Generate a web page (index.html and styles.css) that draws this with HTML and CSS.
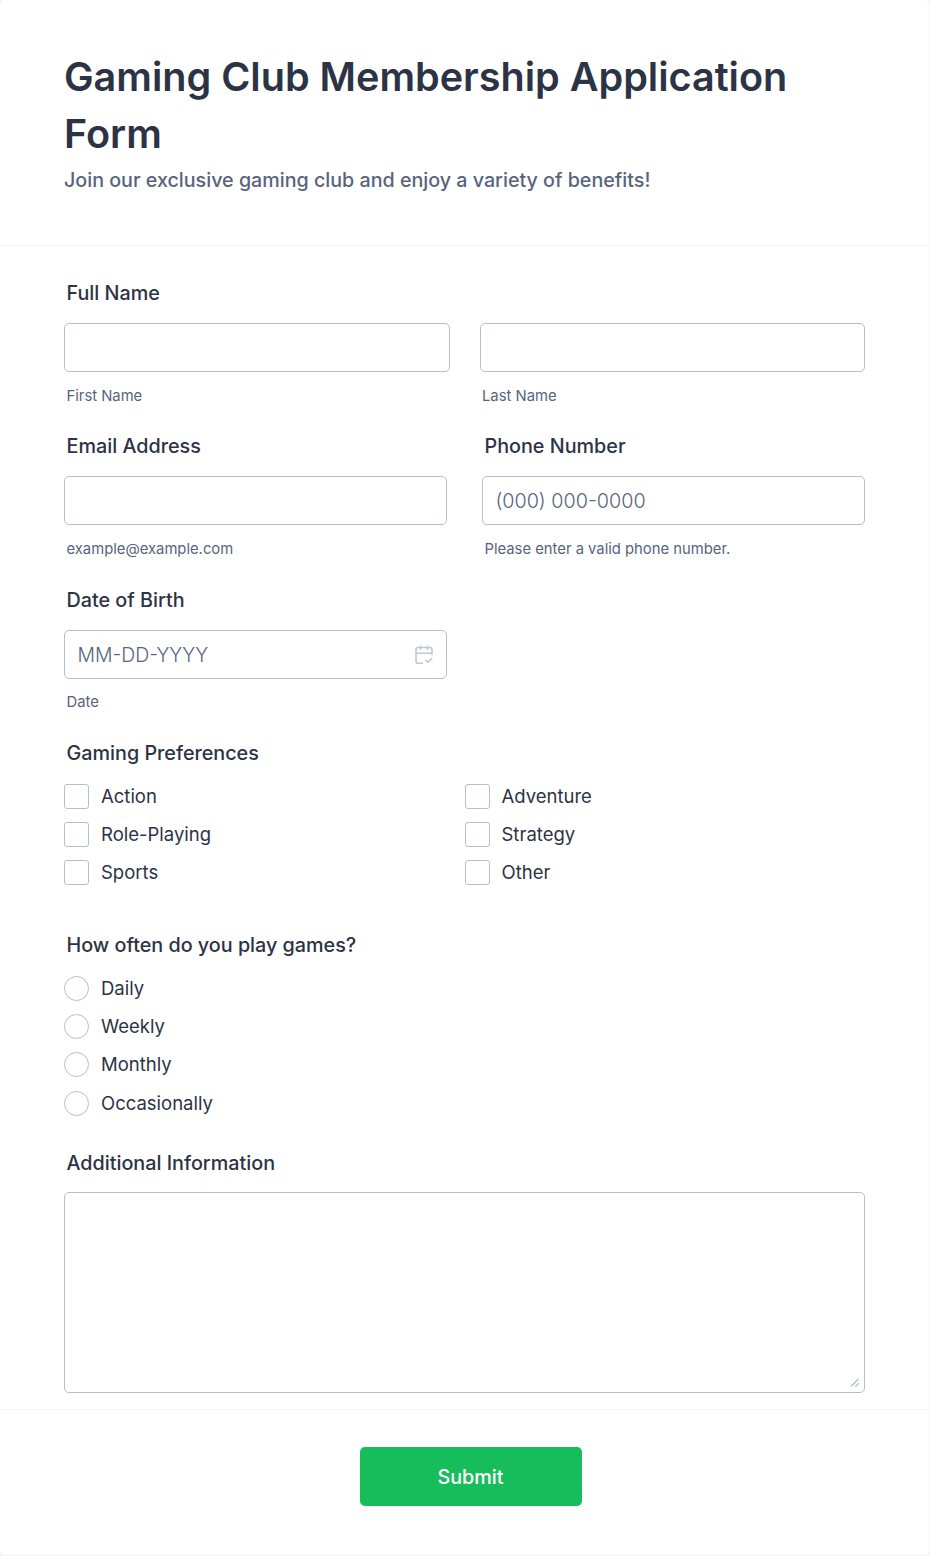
FILE: index.html
```html
<!DOCTYPE html>
<html lang="en">

<head>
    <meta charset="UTF-8" />
    <meta name="viewport" content="width=device-width, initial-scale=1.0" />
    <title>Gaming Club Membership Application Form</title>
    <link rel="stylesheet" href="styles.css">
</head>

<body>
    <form class="form">
        <div class="form-header">
            <h1>Gaming Club Membership Application Form</h1>
            <p>Join our exclusive gaming club and enjoy a variety of benefits!</p>
        </div>

        <div class="form-body">
            <!-- Full name -->
            <div class="field">
                <label class="label" for="first">Full Name</label>
                <div class="names">
                    <div>
                        <input class="text-input" type="text" id="first">
                        <span class="sub-label">First Name</span>
                    </div>
                    <div>
                        <input class="text-input" type="text" id="last">
                        <span class="sub-label">Last Name</span>
                    </div>
                </div>
            </div>

            <!-- Email and phone -->
            <div class="columns">
                <div class="field">
                    <label class="label" for="email">Email Address</label>
                    <input class="text-input" type="email" id="email">
                    <span class="sub-label">example@example.com</span>
                </div>
                <div class="field">
                    <label class="label" for="phone">Phone Number</label>
                    <input class="text-input" type="tel" id="phone" placeholder="(000) 000-0000">
                    <span class="sub-label">Please enter a valid phone number.</span>
                </div>
            </div>

            <!-- Date of birth -->
            <div class="columns">
                <div class="field">
                    <label class="label" for="birth">Date of Birth</label>
                    <div class="date-box">
                        <input class="text-input" type="text" id="birth" placeholder="MM-DD-YYYY">
                        <svg class="calendar" width="18" height="20" viewBox="0 0 18 20">
                            <path d="M8 18.2H3A2 2 0 0 1 1 16.2V4.5A2 2 0 0 1 3 2.5H15A2 2 0 0 1 17 4.5V10M1 8.2H17M5.5 0.5V5M12.5 0.5V5M10.5 14.8L13 17.2L17.2 13" />
                        </svg>
                    </div>
                    <span class="sub-label">Date</span>
                </div>
            </div>

            <div class="field-options">
                <span class="label">Gaming Preferences</span>
                <div class="options two-cols">
                    <label class="option"><input type="checkbox">Action</label>
                    <label class="option"><input type="checkbox">Adventure</label>
                    <label class="option"><input type="checkbox">Role-Playing</label>
                    <label class="option"><input type="checkbox">Strategy</label>
                    <label class="option"><input type="checkbox">Sports</label>
                    <label class="option"><input type="checkbox">Other</label>
                </div>
            </div>

            <div class="field-options often">
                <span class="label">How often do you play games?</span>
                <div class="options">
                    <label class="option"><input type="radio" name="often">Daily</label>
                    <label class="option"><input type="radio" name="often">Weekly</label>
                    <label class="option"><input type="radio" name="often">Monthly</label>
                    <label class="option"><input type="radio" name="often">Occasionally</label>
                </div>
            </div>

            <div class="field-info">
                <label class="label" for="info">Additional Information</label>
                <div class="area-box">
                    <textarea id="info"></textarea>
                    <svg class="grip" width="10" height="10" viewBox="0 0 10 10">
                        <path d="M1 8.5L8.5 1M5.2 8.7L8.8 5.2" />
                    </svg>
                </div>
            </div>
        </div>

        <div class="form-footer">
            <button class="submit" type="button">Submit</button>
        </div>
    </form>
</body>

</html>
```

FILE: styles.css
```css
* {
    box-sizing: border-box;
}

body {
    margin: 0;
    padding: 0 1px 1px 0;
    background-color: #f3f3fe;
    font-family: Inter, sans-serif;
    color: #2c3345;
}

.form {
    height: 1555px;
    background-color: #fff;
    border-radius: 5px;
}

.form-header {
    height: 246px;
    padding: 49px 64px 0;
    border-bottom: 1px solid #f3f3fe;
}

h1 {
    margin: 0;
    font-size: 39.55px;
    font-weight: 600;
    line-height: 57px;
}

.form-header p {
    margin: 5px 0 0;
    font-size: 19.68px;
    font-weight: 500;
    line-height: 24px;
    color: #57647e;
}

.form-body {
    height: 1164px;
    padding: 35px 64px 0;
    border-bottom: 1px solid #f3f3fe;
}

.field {
    height: 153.3px;
}

.label {
    display: block;
    height: 24px;
    padding-left: 2.5px;
    font-size: 19.75px;
    font-weight: 500;
    line-height: 25px;
}

.text-input {
    display: block;
    width: 100%;
    height: 49px;
    margin-top: 18px;
    padding: 0 12.4px;
    border: 1px solid #b8bdcd;
    border-radius: 5px;
    outline: none;
    font-family: inherit;
    font-size: 19.75px;
    background-color: #fff;
}

.text-input::placeholder {
    color: #57647e;
    font-weight: 300;
}

#birth {
    padding-top: 1px;
}

#birth::placeholder {
    font-size: 19.45px;
}

.sub-label {
    display: block;
    margin-top: 14.7px;
    padding-left: 2.5px;
    font-size: 14.8px;
    line-height: 18px;
    color: #57647e;
}

.names {
    display: grid;
    grid-template-columns: 1fr 1fr;
    gap: 30px;
}

.columns {
    display: grid;
    grid-template-columns: 1fr 1fr;
    gap: 35px;
}

.date-box,
.area-box {
    position: relative;
}

.calendar {
    position: absolute;
    top: 15px;
    right: 14px;
}

.calendar path {
    fill: none;
    stroke: #c3c7d4;
    stroke-width: 1.6;
}

.options {
    display: grid;
    row-gap: 13.3px;
    margin-top: 19px;
}

.two-cols {
    grid-template-columns: 1fr 1fr;
}

.option {
    display: flex;
    align-items: flex-start;
    gap: 12px;
    height: 25px;
    font-size: 18.5px;
    line-height: 24px;
}

.option input {
    appearance: none;
    width: 25px;
    height: 25px;
    margin: 0;
    border: 1px solid #b8bdcd;
    border-radius: 3px;
    background-color: #fff;
}

.option input[type="radio"] {
    border-radius: 50%;
}

.often {
    margin-top: 47.2px;
}

.field-info {
    margin-top: 35.4px;
}

.area-box {
    margin-top: 17px;
}

textarea {
    display: block;
    width: 100%;
    height: 201.5px;
    border: 1px solid #b8bdcd;
    border-radius: 5px;
    outline: none;
    resize: none;
}

.grip {
    position: absolute;
    right: 5px;
    bottom: 5px;
}

.grip path {
    fill: none;
    stroke: #b8bdcd;
    stroke-width: 1.3;
}

.form-footer {
    display: flex;
    justify-content: center;
    padding: 37px 0 0 12px;
}

.submit {
    width: 222px;
    height: 59px;
    border: none;
    border-radius: 5px;
    background-color: #18bd5b;
    color: #fff;
    font-family: inherit;
    font-size: 19.8px;
    font-weight: 500;
}
```
